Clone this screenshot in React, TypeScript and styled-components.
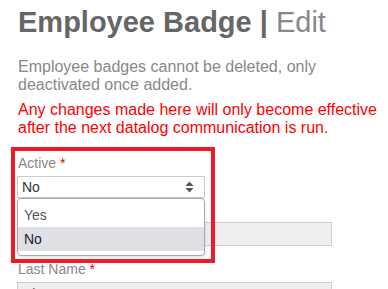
import React from "react";
import styled, { createGlobalStyle } from "styled-components";

const GlobalStyle = createGlobalStyle`
  html, body {
    margin: 0;
    padding: 0;
    background: #fff;
  }
  body {
    font-family: "Liberation Sans", Arial, sans-serif;
    overflow: hidden;
  }
`;

const Page = styled.div`
  position: relative;
  width: 388px;
  height: 289px;
  overflow: hidden;
  padding: 5px 0 0 17px;
  box-sizing: border-box;
`;

const Title = styled.h1`
  margin: 0 0 19px 1px;
  font-size: 29px;
  line-height: 34px;
  font-weight: 700;
  color: #666;
  white-space: nowrap;

  span {
    font-weight: 400;
    color: #888;
  }
`;

const Note = styled.p<{ $alert?: boolean }>`
  margin: 0 0 7px 1px;
  width: ${(p) => (p.$alert ? "370px" : "310px")};
  font-size: 16px;
  line-height: 18px;
  color: ${(p) => (p.$alert ? "#ff0000" : "#888")};
  white-space: ${(p) => (p.$alert ? "nowrap" : "normal")};
`;

const Form = styled.div`
  margin-top: 18px;
  display: flex;
  flex-direction: column;
`;

const Field = styled.div<{ $after: number }>`
  display: flex;
  flex-direction: column;
  gap: 5px;
  margin-bottom: ${(p) => p.$after}px;
`;

const Label = styled.label`
  font-size: 14px;
  line-height: 16px;
  color: #888;
  padding-left: 1px;

  em {
    font-style: normal;
    color: #e00;
  }
`;

const SelectWrap = styled.div`
  position: relative;
  width: 188px;
`;

const SelectBox = styled.div`
  height: 22px;
  box-sizing: border-box;
  border: 1px solid #ccc;
  background: #fff;
  display: flex;
  align-items: center;
  justify-content: space-between;
  padding: 0 10px 0 4px;
  font-size: 14px;
  color: #333;
`;

const Menu = styled.ul`
  position: absolute;
  top: 22px;
  left: 0;
  width: 188px;
  box-sizing: border-box;
  margin: 0;
  padding: 4px 0;
  list-style: none;
  background: #fff;
  border: 1px solid #a9a9a9;
  border-radius: 4px;
  box-shadow: 0 1px 3px rgba(0, 0, 0, 0.15);
  z-index: 2;
`;

const Option = styled.li<{ $selected?: boolean }>`
  height: 24px;
  display: flex;
  align-items: center;
  padding-left: 6px;
  font-size: 14px;
  color: ${(p) => (p.$selected ? "#223" : "#555")};
  background: ${(p) => (p.$selected ? "#dfdfe6" : "transparent")};
`;

const TextInput = styled.div`
  width: 315px;
  height: 24px;
  box-sizing: border-box;
  border: 1px solid #ccc;
  background: #eee;
  font-size: 14px;
  line-height: 22px;
  padding-left: 5px;
  color: #555;
`;

const Highlight = styled.div`
  position: absolute;
  left: 11px;
  top: 147px;
  width: 204px;
  height: 116px;
  box-sizing: border-box;
  border: 4px solid #ed1c24;
  z-index: 3;
  pointer-events: none;
`;

const Arrows = () => (
  <svg width="9" height="12" viewBox="0 0 9 12">
    <path d="M4.5 0.5 L8.5 5 L0.5 5 Z" fill="#555" />
    <path d="M0.5 7 L8.5 7 L4.5 11.5 Z" fill="#555" />
  </svg>
);

export default function App() {
  return (
    <>
      <GlobalStyle />
      <Page>
        <Title>
          Employee Badge | <span>Edit</span>
        </Title>
        <Note>Employee badges cannot be deleted, only deactivated once added.</Note>
        <Note $alert>
          Any changes made here will only become effective
          <br />
          after the next datalog communication is run.
        </Note>
        <Form>
          <Field $after={3}>
            <Label>
              Active <em>*</em>
            </Label>
            <SelectWrap>
              <SelectBox>
                No
                <Arrows />
              </SelectBox>
              <Menu>
                <Option>Yes</Option>
                <Option $selected>No</Option>
              </Menu>
            </SelectWrap>
          </Field>
          <Field $after={15}>
            <Label>
              First Name <em>*</em>
            </Label>
            <TextInput />
          </Field>
          <Field $after={0}>
            <Label>
              Last Name <em>*</em>
            </Label>
            <TextInput>Alvarez</TextInput>
          </Field>
        </Form>
        <Highlight />
      </Page>
    </>
  );
}
